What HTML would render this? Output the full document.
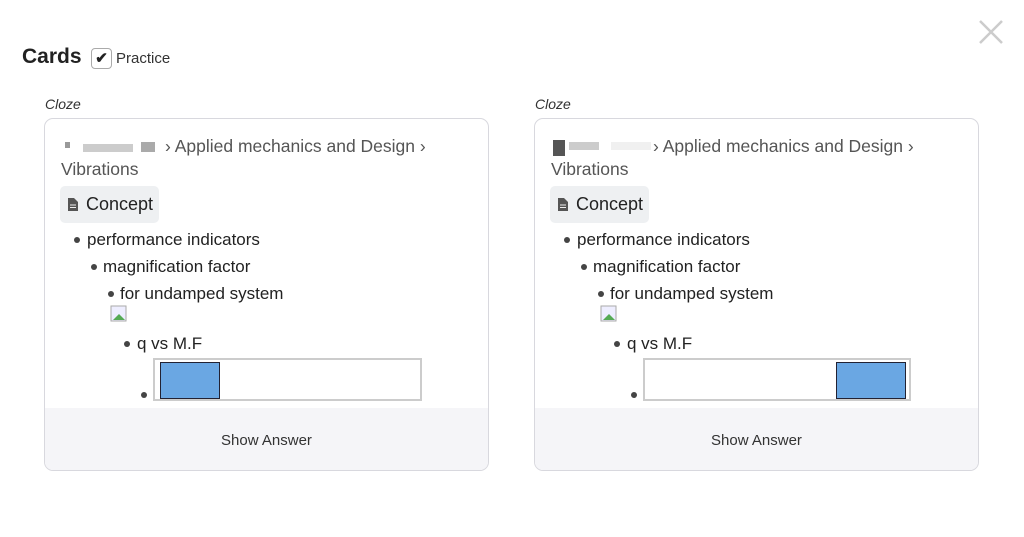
<!DOCTYPE html>
<html><head><style>
*{margin:0;padding:0;box-sizing:border-box}
body{width:1024px;height:537px;background:#fff;font-family:"Liberation Sans",sans-serif;position:relative;overflow:hidden;color:#222}
.a{position:absolute;white-space:nowrap}
.card{position:absolute;top:118px;width:445px;height:353px;border:1px solid #d8d8de;border-radius:9px;overflow:hidden;background:#fff}
.foot{position:absolute;left:0;right:0;bottom:0;height:62px;background:#f5f5f8;text-align:center;line-height:66px;font-size:15px;color:#333}
.bc{font-size:17.5px;color:#555}
.li{font-size:17px;color:#222}
.dot{position:absolute;width:6px;height:6px;border-radius:50%;background:#444}
.tag{position:absolute;left:15px;top:67px;width:99px;height:37px;background:#eef0f2;border-radius:5px;font-size:18px;line-height:37px;padding-left:26px}
.px{position:absolute;height:9px;background:#888}
</style></head><body>
<div class="a" style="left:22px;top:45px;font-size:21px;font-weight:bold;color:#222">Cards</div>
<div class="a" style="left:91px;top:48px;width:21px;height:21px;border:1px solid #aaa;border-radius:4px;font-size:15px;line-height:19px;text-align:center;font-weight:bold">✔</div>
<div class="a" style="left:116px;top:50px;font-size:15px;color:#333">Practice</div>
<svg class="a" style="left:978px;top:19px" width="26" height="26"><path d="M2 2L24 24M24 2L2 24" stroke="#ccc" stroke-width="2.5"/></svg>
<div class="a" style="left:45px;top:96px;font-size:14px;font-style:italic;color:#333">Cloze</div>
<div class="a" style="left:535px;top:96px;font-size:14px;font-style:italic;color:#333">Cloze</div>

<div class="card" style="left:44px">
 <div class="px" style="left:20px;top:23px;width:5px;height:6px;background:#999"></div>
 <div class="px" style="left:38px;top:25px;width:50px;height:8px;background:#ccc"></div>
 <div class="px" style="left:96px;top:23px;width:14px;height:10px;background:#aaa"></div>
 <div class="a bc" style="left:120px;top:17px">› Applied mechanics and Design ›</div>
 <div class="a bc" style="left:16px;top:40px">Vibrations</div>
 <div class="tag"><svg style="position:absolute;left:8px;top:12px" width="10" height="13"><path d="M0 0H6L10 4V13H0Z" fill="#555"/><path d="M2 7H8M2 9.5H8" stroke="#eee"/></svg>Concept</div>
 <div class="dot" style="left:29px;top:118px"></div><div class="a li" style="left:42px;top:111px">performance indicators</div>
 <div class="dot" style="left:46px;top:145px"></div><div class="a li" style="left:58px;top:138px">magnification factor</div>
 <div class="dot" style="left:63px;top:172px"></div><div class="a li" style="left:75px;top:165px">for undamped system</div>
 <svg class="a" style="left:65px;top:186px" width="18" height="18"><rect x="1" y="1" width="15" height="15" fill="#eef" stroke="#aaa"/><path d="M3 15L9 9L15 15Z" fill="#5a5"/></svg>
 <div class="dot" style="left:79px;top:222px"></div><div class="a li" style="left:92px;top:215px">q vs M.F</div>
 <div class="dot" style="left:96px;top:273px"></div>
 <div class="a" style="left:108px;top:239px;width:269px;height:43px;border:2px solid #ccc"></div>
 <div class="a" style="left:115px;top:243px;width:60px;height:37px;background:#6aa7e3;border:1.5px solid #223"></div>
 <div class="foot">Show Answer</div>
</div>

<div class="card" style="left:534px">
 <div class="px" style="left:18px;top:21px;width:12px;height:16px;background:#555"></div>
 <div class="px" style="left:34px;top:23px;width:30px;height:8px;background:#ccc"></div>
 <div class="px" style="left:76px;top:23px;width:40px;height:8px;background:#f0f0f0"></div>
 <div class="a bc" style="left:118px;top:17px">› Applied mechanics and Design ›</div>
 <div class="a bc" style="left:16px;top:40px">Vibrations</div>
 <div class="tag"><svg style="position:absolute;left:8px;top:12px" width="10" height="13"><path d="M0 0H6L10 4V13H0Z" fill="#555"/><path d="M2 7H8M2 9.5H8" stroke="#eee"/></svg>Concept</div>
 <div class="dot" style="left:29px;top:118px"></div><div class="a li" style="left:42px;top:111px">performance indicators</div>
 <div class="dot" style="left:46px;top:145px"></div><div class="a li" style="left:58px;top:138px">magnification factor</div>
 <div class="dot" style="left:63px;top:172px"></div><div class="a li" style="left:75px;top:165px">for undamped system</div>
 <svg class="a" style="left:65px;top:186px" width="18" height="18"><rect x="1" y="1" width="15" height="15" fill="#eef" stroke="#aaa"/><path d="M3 15L9 9L15 15Z" fill="#5a5"/></svg>
 <div class="dot" style="left:79px;top:222px"></div><div class="a li" style="left:92px;top:215px">q vs M.F</div>
 <div class="dot" style="left:96px;top:273px"></div>
 <div class="a" style="left:108px;top:239px;width:268px;height:43px;border:2px solid #ccc"></div>
 <div class="a" style="left:301px;top:243px;width:70px;height:37px;background:#6aa7e3;border:1.5px solid #223"></div>
 <div class="foot">Show Answer</div>
</div>
</body></html>
